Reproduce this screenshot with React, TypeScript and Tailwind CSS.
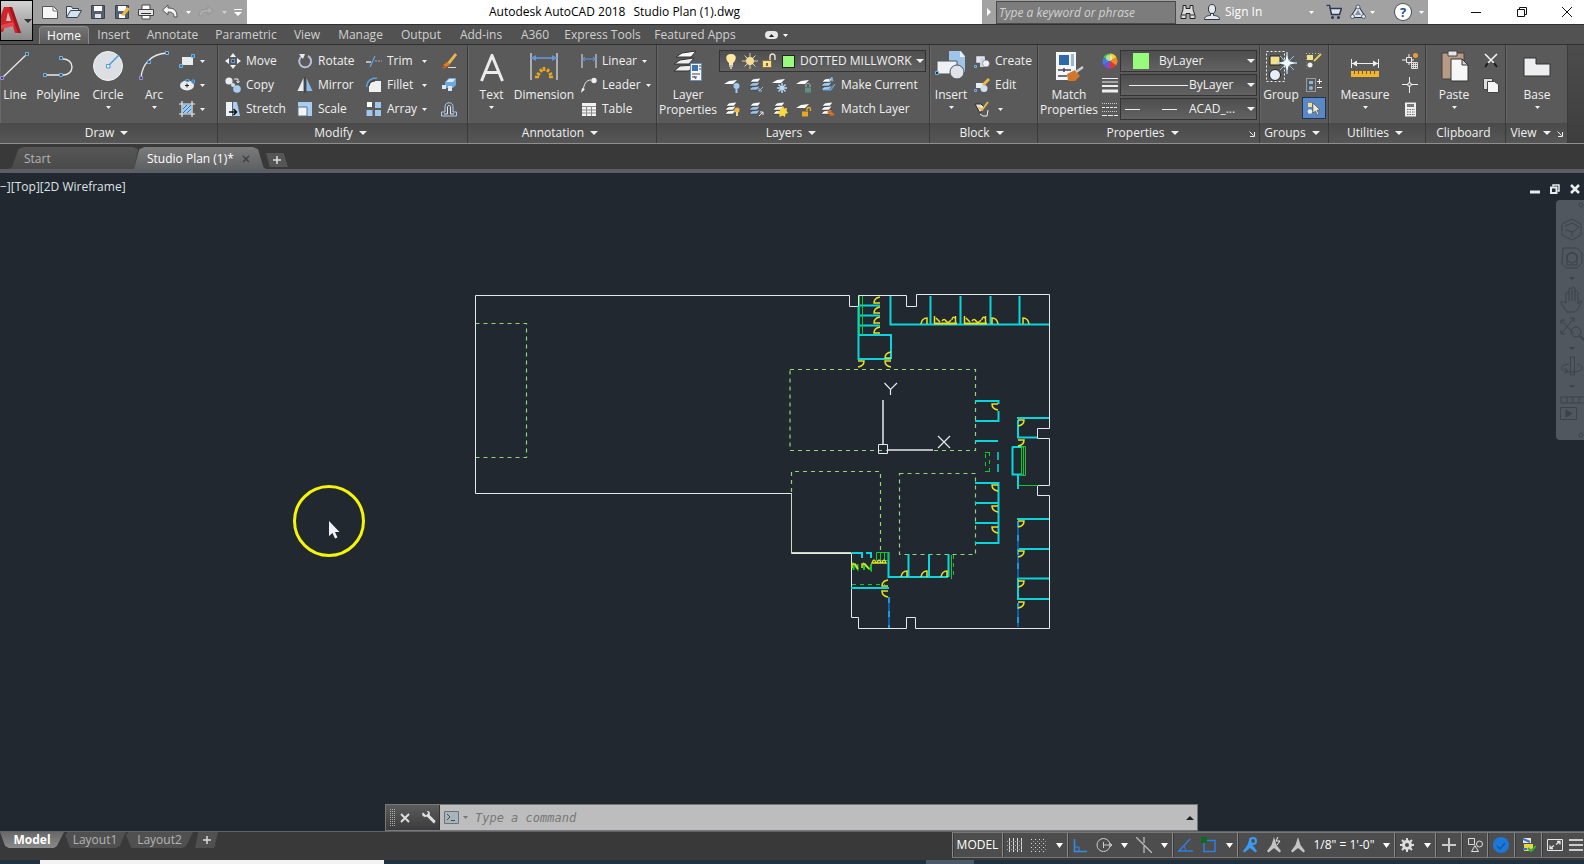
import type { ReactNode } from "react";

type SvgProps = { children: ReactNode; className?: string };

function Small({ children, className = "" }: SvgProps) {
  return (
    <svg viewBox="0 0 16 16" fill="none" className={"size-4 shrink-0 " + className}>
      {children}
    </svg>
  );
}

function Large({ children, className = "" }: SvgProps) {
  return (
    <svg viewBox="0 0 32 32" fill="none" className={"size-8 shrink-0 " + className}>
      {children}
    </svg>
  );
}

function Caret({ className = "" }: { className?: string }) {
  return (
    <svg viewBox="0 0 8 4" className={"h-1 w-2 shrink-0 " + className}>
      <path d="M0 0h8L4 4z" fill="currentColor" />
    </svg>
  );
}

function TinyCaret({ className = "" }: { className?: string }) {
  return (
    <svg viewBox="0 0 5 3" className={"h-[3px] w-[5px] shrink-0 " + className}>
      <path d="M0 0h5L2.500 3z" fill="currentColor" />
    </svg>
  );
}

/* Ribbon building blocks */

function Panel({ title, caret = true, launcher, className = "", children }: { title: string; caret?: boolean; launcher?: boolean; className?: string; children: ReactNode }) {
  return (
    <section className={"flex shrink-0 flex-col border-r border-[#3a3a3a] shadow-[inset_1px_0_0_#686868] " + className}>
      <div className="flex h-[79px] overflow-hidden pt-1">{children}</div>
      <button className={"relative flex h-5 items-center justify-center gap-[6px] bg-linear-to-b from-[#4a4a4a] to-[#565656] " + (launcher ? "pr-3" : "pr-1")}>
        {title}
        {caret && <Caret />}
        {launcher && (
          <svg viewBox="0 0 6 6" className="absolute right-1 top-2 size-[6px]" fill="none" stroke="#eee">
            <path d="M0.500 0.500l4 4M5.500 1v4.500H1" />
          </svg>
        )}
      </button>
    </section>
  );
}

function BigButton({ label, second, arrow, className = "", children }: { label: string; second?: string; arrow?: boolean; className?: string; children: ReactNode }) {
  return (
    <button className={"flex h-[72px] shrink-0 flex-col items-center whitespace-nowrap leading-[15px] " + className}>
      <span className="flex h-[38px] items-center justify-center pb-1">{children}</span>
      <span>{label}</span>
      {second && <span>{second}</span>}
      {arrow && <TinyCaret className="mt-1" />}
    </button>
  );
}

function Row({ label, arrow, children }: { label?: string; arrow?: boolean; children: ReactNode }) {
  return (
    <button className="flex h-6 w-full items-center gap-[5px] whitespace-nowrap">
      {children}
      {label && <span>{label}</span>}
      {arrow && <TinyCaret className="ml-auto mr-3" />}
    </button>
  );
}

/* Draw icons */

const LineIcon = () => (
  <Large>
    <path d="M3 28L28 4" stroke="#e8e8e8" strokeWidth="1.3" />
    <path d="M1.500 26.500h3v3h-3z" stroke="#a08be0" fill="#44505c" />
    <path d="M26.500 2.500h3v3h-3z" stroke="#6fb3e4" fill="#44505c" />
  </Large>
);
const PolylineIcon = () => (
  <Large>
    <path d="M4 25h17c5 0 9-3 9-8s-4-8-9-8" stroke="#e8e8e8" strokeWidth="1.4" />
    <path d="M1.500 23.500h3v3h-3zM17.500 23.500h3v3h-3zM17.500 6.500h3v3h-3z" stroke="#6fb3e4" fill="#44505c" />
  </Large>
);
const CircleIcon = () => (
  <Large>
    <circle cx="16" cy="16" r="14.500" fill="#dcdfe3" stroke="#f4f4f4" />
    <path d="M17 15L27 5" stroke="#4a9bd9" strokeWidth="1.4" />
    <path d="M14.500 14.500h3.500v3.500h-3.500z" fill="#eef4fa" stroke="#4a9bd9" />
  </Large>
);
const ArcIcon = () => (
  <Large>
    <path d="M3 28C4 14 13 4 29 3" stroke="#e8e8e8" strokeWidth="1.4" />
    <path d="M1.500 26.500h3v3h-3z" stroke="#a08be0" fill="#44505c" />
    <path d="M9.500 10.500h3v3h-3zM27.500 1.500h3v3h-3z" stroke="#6fb3e4" fill="#44505c" />
  </Large>
);
const RectIcon = () => (
  <Small>
    <path d="M3 4h11v8H3z" fill="#e9ecef" />
    <path d="M0.500 11.500h3v3h-3zM12.500 1.500h3v3h-3z" fill="#3b6ea5" stroke="#6fb3e4" />
  </Small>
);
const EllipseIcon = () => (
  <Small>
    <ellipse cx="8" cy="8.500" rx="7" ry="5" fill="#e9ecef" />
    <path d="M6 8.500h4M8 6.500v4" stroke="#222" />
    <path d="M7 2.500h3v2H7zM13 3h2.500v3H13z" fill="#3b6ea5" stroke="#5aa2dc" />
  </Small>
);
const HatchIcon = () => (
  <Small>
    <path d="M3 0v16M13 0v16M0 3h16M0 13h16" stroke="#e9ecef" strokeWidth="1.200" />
    <path d="M3.500 3.500h9v9h-9z" fill="#9fc9ee" />
    <path d="M4 8l4-4M4 12l8-8M8 12l4-4" stroke="#3673ad" />
  </Small>
);

/* Modify icons */

const MoveIcon = () => (
  <Small>
    <path d="M8 0l3 4H5zM8 16l3-4H5zM0 8l4-3v6zM16 8l-4-3v6z" fill="#f2f2f2" />
    <path d="M6.500 6.500h3v3h-3z" stroke="#5aa2dc" fill="#2d4a66" />
  </Small>
);
const RotateIcon = () => (
  <Small>
    <path d="M5 3.200A6 6 0 1 0 11 3" stroke="#b9bed8" strokeWidth="2" />
    <path d="M2 1h6L6 6z" fill="#e6e9f5" />
  </Small>
);
const TrimIcon = () => (
  <Small>
    <path d="M0 9h5" stroke="#e2e2e2" strokeWidth="1.400" />
    <path d="M4 14L9 3" stroke="#5aa2dc" strokeWidth="1.400" />
    <path d="M9 8h7" stroke="#8fb6dc" strokeDasharray="2 1" />
  </Small>
);
const CopyIcon = () => (
  <Small>
    <circle cx="4" cy="4" r="3.600" fill="#e9edf2" />
    <circle cx="8" cy="8" r="2" fill="#cfe0f2" />
    <circle cx="12" cy="12" r="3.800" fill="#a9cdf0" />
    <path d="M9 2h4v3M11.500 4l1.500 2 1.500-2" stroke="#eee" />
  </Small>
);
const MirrorIcon = () => (
  <Small>
    <path d="M6.500 1v13H0.500z" fill="#e9edf2" />
    <path d="M9.500 1v13h6z" fill="#86bdee" />
    <path d="M8 0v16" stroke="#333" />
  </Small>
);
const FilletIcon = () => (
  <Small>
    <path d="M0.500 10C1 4 5 1 11 1" stroke="#5aa2dc" strokeWidth="1.400" />
    <path d="M3 15V9c0-3 3-5 6-5h6v11z" fill="#eef0f2" />
    <path d="M3 9c0-3 3-5 6-5" stroke="#222" />
  </Small>
);
const StretchIcon = () => (
  <Small>
    <path d="M1 1h6v14H1z" fill="#eef2f6" />
    <path d="M8 1h4l3 14H8z" fill="#a9cdf0" />
    <path d="M4 11h7M8.500 8l3 3-3 3" stroke="#111" strokeWidth="1.500" />
  </Small>
);
const ScaleIcon = () => (
  <Small>
    <path d="M1 1h14v14H1z" fill="#a9cdf0" />
    <path d="M1 6h9v9H1z" fill="#f2f4f6" stroke="#56718c" />
  </Small>
);
const ArrayIcon = () => (
  <Small>
    <path d="M1 1h5v5H1z" fill="#fff" />
    <path d="M9 1h6v6H9zM0.500 9h6v6h-6zM9 9h6v6H9z" fill="#9fc6ec" />
  </Small>
);
const EraseIcon = () => (
  <Small>
    <path d="M6 10L14 0l2 2-7 9z" fill="#eab54a" />
    <path d="M2 12l4-3 3 3-4 2z" fill="#e07a1e" />
    <path d="M1 14.500h4" stroke="#d4571c" strokeWidth="1.500" />
    <path d="M7 14.500h8" stroke="#ddd" />
  </Small>
);
const ExplodeIcon = () => (
  <Small>
    <path d="M4 5l4-4h7v7l-3 3H4z" fill="#6fa8dc" />
    <path d="M1 8h4v4H1zM7 9h4v5H7zM8 2h6l-2 3H5z" fill="#d9e8f6" />
  </Small>
);
const OffsetIcon = () => (
  <Small>
    <path d="M0.500 15v-4H4V5.500C4 0.500 12 0.500 12 5.500V11h3.500v4z" stroke="#a9d0f2" />
    <path d="M3 13h3.500V6c0-2 3-2 3 0v7H13" stroke="#e2e8ee" />
  </Small>
);

/* Annotation icons */

const DimensionIcon = () => (
  <Large>
    <path d="M3 3v27M29 3v27" stroke="#e6e6e6" strokeWidth="1.200" />
    <path d="M3 8h26" stroke="#5a9be0" strokeWidth="1.600" />
    <path d="M3 8l5-3v6zM29 8l-5-3v6z" fill="#5a9be0" />
    <path d="M7 27h4M9 23l3 2M12 19l2 3M16 17v4M21 19l-2 3M24 23l-3 2M25 27h-4" stroke="#e9a820" strokeWidth="2.600" />
  </Large>
);
const LinearIcon = () => (
  <Small>
    <path d="M1 1v14M15 1v14" stroke="#e6e6e6" />
    <path d="M1 6h14M4 4L1.500 6 4 8M12 4l2.500 2L12 8" stroke="#5a9be0" />
  </Small>
);
const LeaderIcon = () => (
  <Small>
    <path d="M2 14C3 7 5 3 10 3" stroke="#e6e6e6" />
    <circle cx="13" cy="3.500" r="2.700" fill="#eee" />
    <path d="M0 16l1-5 3 1z" fill="#eee" />
  </Small>
);
const TableIcon = () => (
  <Small>
    <path d="M1 2h14v13H1z" fill="#f2f2f2" />
    <path d="M1 5.500h14M1 9h14M1 12h14M5.500 5v10M10.500 5v10" stroke="#8a8a8a" />
  </Small>
);

/* Layer icons */

const Sheets = ({ accent = "#fff" }: { accent?: string }) => (
  <>
    <path d="M4 10l8-1-3 4H1z" fill={accent} stroke="#333" strokeWidth="0.500" />
    <path d="M4 6l8-1-3 4H1z" fill={accent} stroke="#333" strokeWidth="0.500" />
    <path d="M5 2l8-1-3 4H2z" fill="#fff" stroke="#333" strokeWidth="0.500" />
  </>
);
const LayerPropsIcon = () => (
  <Large>
    <path d="M8 16l14-1-5 6H2z" fill="#eee" stroke="#333" />
    <path d="M8 10l14-2-5 6H2z" fill="#eee" stroke="#333" />
    <path d="M10 3l14-2-5 6H4z" fill="#fff" stroke="#333" />
    <path d="M18.500 13.500h11v17h-11z" fill="#f4f6f8" stroke="#6d8db0" />
    <path d="M20 15h6v6h-6z" fill="#3e74b4" />
    <path d="M27 16h2M27 19h2M20 24h8M20 27h5M22 26l2 3" stroke="#445" />
  </Large>
);
const LayerOffIcon = () => (
  <Small>
    <path d="M5 4l8-1-4 4H0z" fill="#fff" />
    <circle cx="12.500" cy="9" r="3" fill="#9fcbf2" />
    <path d="M12.500 12v4" stroke="#9fcbf2" strokeWidth="2" />
  </Small>
);
const LayerIsoIcon = () => (
  <Small>
    <Sheets accent="#9cc4e8" />
    <path d="M15 10l-4 4M11 11v3h3" stroke="#8fc0ee" />
  </Small>
);
const LayerFreezeIcon = () => (
  <Small>
    <path d="M5 3l8-1-4 4H0z" fill="#fff" />
    <path d="M10 6v10M5 11h10M6.500 7.500l7 7M13.500 7.500l-7 7" stroke="#b8dcfa" strokeWidth="1.400" />
  </Small>
);
const LayerLockIcon = () => (
  <Small>
    <path d="M5 4l8-1-4 4H0z" fill="#fff" />
    <path d="M9 10.500h6v5H9z" fill="#5f8f86" />
    <path d="M10 10V8c0-2 4-2 4 0v2" stroke="#9fc0b8" />
  </Small>
);
const MakeCurrentIcon = () => (
  <Small>
    <Sheets accent="#a9d0f2" />
    <path d="M3 13h8l4-6M9 3l3-3 1 4z" stroke="#6fb3e4" fill="#6fb3e4" fillOpacity="0.400" />
  </Small>
);
const LayerOnIcon = () => (
  <Small>
    <Sheets />
    <circle cx="13" cy="9" r="2.600" fill="#f4b740" />
    <path d="M13 11v4" stroke="#f7d58a" strokeWidth="2" />
  </Small>
);
const LayerUnisoIcon = () => (
  <Small>
    <Sheets accent="#9cc4e8" />
    <path d="M11 15l4-4M12 11h3v3" stroke="#eee" />
  </Small>
);
const LayerThawIcon = () => (
  <Small>
    <Sheets />
    <path d="M11 5l1.200 2.500L15 7l-.5 2.800L16 12l-2.500.8L13 16l-2.500-1.600L7.500 16l0-3L5.500 11l2.500-1.200L8 7l2 .5z" fill="#ffd93b" />
  </Small>
);
const LayerUnlockIcon = () => (
  <Small>
    <path d="M5 4l8-1-4 4H0z" fill="#fff" />
    <path d="M6 10.500h6v5H6z" fill="#e9a820" />
    <path d="M11 10V8c0-2 3.500-2 3.500 0v2" stroke="#e9a820" strokeWidth="1.300" />
  </Small>
);
const MatchLayerIcon = () => (
  <Small>
    <Sheets />
    <path d="M7 11l3-2 5 5-4 1z" fill="#d2711f" />
  </Small>
);
const BulbIcon = () => (
  <Small>
    <path d="M8 1C1 1 3 8 6 10v2h4v-2c3-2 5-9-2-9z" fill="#ffe9a0" />
    <path d="M6 13h4M7 15h2" stroke="#ddd" strokeWidth="1.500" />
  </Small>
);
const SunIcon = () => (
  <Small>
    <path d="M8 0v16M0 8h16M2.500 2.500l11 11M13.500 2.500l-11 11" stroke="#d8cfa8" />
    <circle cx="8" cy="8" r="4" fill="#f8dc92" />
  </Small>
);
const UnlockIcon = () => (
  <Small>
    <path d="M1.500 7.500h9v7h-9z" fill="#f6dd9a" stroke="#8a6d2a" />
    <path d="M9 7V4c0-4 5-4 5 0v3" stroke="#ece4c8" strokeWidth="1.400" />
    <path d="M6 10v3" stroke="#5a4410" strokeWidth="1.500" />
  </Small>
);

/* Block and property icons */

const InsertIcon = () => (
  <Large>
    <path d="M14 1h12l4 5v16H14z" fill="#9fc4ea" />
    <path d="M25 1l5 6h-5z" fill="#e8f1fb" />
    <path d="M2 11h20v13H2z" fill="#eef0f3" stroke="#4a5460" />
    <circle cx="22" cy="22" r="7" fill="#dfe3e8" stroke="#4a5460" />
    <path d="M0.500 21.500h3v3h-3z" fill="#234" stroke="#6fb3e4" />
  </Large>
);
const CreateIcon = () => (
  <Small>
    <path d="M2 3h9v7H2z" fill="#e6e6f2" stroke="#556" strokeWidth="0.500" />
    <path d="M6 5h5v9H6z" fill="#cfd6e4" />
    <circle cx="12" cy="10.500" r="3.500" fill="#f2f2f2" stroke="#556" strokeWidth="0.500" />
    <path d="M0.500 12.500h2v2h-2z" stroke="#6fb3e4" />
  </Small>
);
const EditIcon = () => (
  <Small>
    <path d="M2 6h8v5H2z" fill="#e6eaf2" />
    <circle cx="10" cy="11.500" r="3.500" fill="#cfe0f2" />
    <path d="M8 7l6-6 2 2-6 6z" fill="#f0b940" />
    <path d="M0.500 12.500h2v2h-2z" stroke="#6fb3e4" />
  </Small>
);
const AttrIcon = () => (
  <Small>
    <path d="M1 3h6l3 3-4 6z" fill="#e6e6e6" stroke="#2c2c2c" />
    <path d="M4 6l4 3 6-8" stroke="#e8bb4a" strokeWidth="1.800" />
    <path d="M6 13l3 2h4l1-6" stroke="#eee" />
  </Small>
);
const MatchPropsIcon = () => (
  <Large>
    <path d="M3 2h20v28H3z" fill="#f4f6f8" />
    <path d="M6 5h10v10H6z" fill="#2f68ab" />
    <path d="M18 4h3v12h-3z" fill="#9bb7d4" />
    <path d="M5 20h13M11 18v4M5 26h9" stroke="#445" strokeWidth="1.500" />
    <path d="M14 24l8-4 5 6-5 5h-7z" fill="#d2762a" />
    <path d="M23 22l7-5" stroke="#c9ccd0" strokeWidth="2.500" />
  </Large>
);
const ColorWheelIcon = () => (
  <Small>
    <path d="M8 8V0.500A7.500 7.500 0 0 1 14.500 4.500z" fill="#f3d436" />
    <path d="M8 8l6.500-3.500A7.500 7.500 0 0 1 14 12.500z" fill="#f08a2b" />
    <path d="M8 8l6 4.500A7.500 7.500 0 0 1 8 15.500z" fill="#dd3737" />
    <path d="M8 8v7.500A7.500 7.500 0 0 1 1.500 12z" fill="#7c4bd0" />
    <path d="M8 8l-6.500 4A7.500 7.500 0 0 1 1.500 4.500z" fill="#3f7be0" />
    <path d="M8 8L1.500 4.500A7.500 7.500 0 0 1 8 0.500z" fill="#57c24b" />
    <circle cx="7" cy="5" r="3" fill="#fff" fillOpacity="0.500" />
  </Small>
);
const LineweightIcon = () => (
  <Small>
    <path d="M0 1.500h16M0 5h16" stroke="#eee" />
    <path d="M0 9h16" stroke="#eee" strokeWidth="2" />
    <path d="M0 14h16" stroke="#eee" strokeWidth="3" />
  </Small>
);
const LinetypeIcon = () => (
  <Small>
    <path d="M0 2.500h16M0 10.500h16" stroke="#ccc" strokeDasharray="1 1" />
    <path d="M0 6.500h16" stroke="#eee" strokeDasharray="3 1" />
    <path d="M0 14.500h16" stroke="#eee" strokeDasharray="5 1" />
  </Small>
);

/* Groups, utilities, clipboard */

const GroupIcon = () => (
  <Large>
    <path d="M1.500 1.500h18v30h-18z" stroke="#eee" strokeDasharray="2 2" />
    <path d="M5 6h10v9H5z" fill="#f2e08c" stroke="#222" />
    <circle cx="10" cy="25" r="5.500" fill="#e6eef6" stroke="#222" />
    <path d="M22 2v22M12 13h20" stroke="#a8d4fa" strokeWidth="1.400" />
    <path d="M15 6l14 14M29 6L15 20" stroke="#8fc4f4" />
    <path d="M22 5l2 6 6 2-6 2-2 6-2-6-6-2 6-2z" fill="#f2faff" />
  </Large>
);
const GroupEditIcon = () => (
  <Small>
    <path d="M1 2h6v5H1z" fill="#f2e08c" />
    <circle cx="4" cy="12" r="2.500" fill="#eee" />
    <path d="M8 8l7-7" stroke="#e8c860" strokeWidth="2" />
    <path d="M0 0.500h15M0 0v16" stroke="#bbb" strokeDasharray="1 2" />
  </Small>
);
const UngroupIcon = () => (
  <Small>
    <path d="M0.500 1.500h9v13h-9z" stroke="#ddd" strokeDasharray="1 1" />
    <path d="M3 4h4v3H3z" fill="#8ab6e0" />
    <circle cx="5" cy="11" r="2" fill="#8ab6e0" />
    <path d="M11 4.500h5M13.500 2v5M11 10.500h5" stroke="#eee" />
  </Small>
);
const GroupSelIcon = () => (
  <Small>
    <path d="M2 3h4v4H2z" fill="#f2e08c" />
    <circle cx="4" cy="11.500" r="2.300" fill="#eee" />
    <path d="M7 3l7 7-3 .3 2 4-1.600.8-2-4L7 13z" fill="#f4e9c8" stroke="#333" strokeWidth="0.500" />
  </Small>
);
const MeasureIcon = () => (
  <Large>
    <path d="M2.500 9v9M29.500 9v9M3 13.500h26" stroke="#eee" />
    <path d="M3 13.500l5-3v6zM29 13.500l-5-3v6z" fill="#eee" />
    <path d="M2 21h28v6H2z" fill="#f0b52c" />
    <path d="M5.500 21v3M9.500 21v3M13.500 21v3M17.500 21v3M21.500 21v3M25.500 21v3" stroke="#7a5410" />
  </Large>
);
const QuickCalcIcon = () => (
  <Small>
    <path d="M0 7h5M7 1v4M7 9v3M9 7h3M4.500 4.500h5v5h-5z" stroke="#eee" />
    <path d="M9.500 9.500h6v6h-6zM9.500 11.500h6M9.500 13.500h6M11.500 10v5M13.500 10v5" stroke="#ddd" />
    <circle cx="13.500" cy="2.500" r="2.500" fill="#ec9a3a" />
  </Small>
);
const PointIcon = () => (
  <Small>
    <path d="M7.500 0v16M0 7.500h16" stroke="#eee" />
    <path d="M6 6h3v3H6z" stroke="#eee" fill="#555" />
  </Small>
);
const CalculatorIcon = () => (
  <Small>
    <path d="M3 1.500h11v14H3z" fill="#eee" />
    <path d="M5 3h7v3H5z" fill="#777" />
    <path d="M5 8.500h8M5 11h8M5 13.500h8" stroke="#666" strokeDasharray="1.500 1" />
  </Small>
);
const PasteIcon = () => (
  <Large>
    <path d="M4 3h22v26H4z" fill="#b59b86" stroke="#4a3f36" />
    <path d="M10 1h9v5h-9z" fill="#e8e8e8" stroke="#444" />
    <path d="M13 9h11l6 6v16H13z" fill="#f6f6f6" stroke="#333" />
    <path d="M24 9v6h6z" fill="#cfcfcf" stroke="#333" />
  </Large>
);
const CutIcon = () => (
  <Small>
    <path d="M2 1l9 9M14 1L5 10" stroke="#f2f2f2" strokeWidth="1.600" />
    <path d="M5 10l-3 4M11 10l3 4" stroke="#1d1d1d" strokeWidth="2" />
  </Small>
);
const CopyClipIcon = () => (
  <Small>
    <path d="M0.500 1.500h9v11h-9z" fill="#ddd" stroke="#444" />
    <path d="M4.500 4.500h7l4 3v8h-11z" fill="#f6f6f6" stroke="#444" />
  </Small>
);
const BaseIcon = () => (
  <Large>
    <path d="M3 8h12v6h14v12H3z" fill="#eceef0" stroke="#333" />
  </Large>
);

/* Title bar */

function TitleBar() {
  return (
    <header className="relative flex h-6 shrink-0 bg-white text-black">
      <div className="flex w-[247px] items-center bg-[#a2a2a2] pl-[42px] text-white">
        <button aria-label="New" className="w-6">
          <Small><path d="M0.500 2.500h11l4 4v8h-15z" fill="#f6f6f6" stroke="#555" /><path d="M11 2v5h5" stroke="#777" /></Small>
        </button>
        <button aria-label="Open" className="w-6">
          <Small><path d="M0.500 13.500v-11h5l1 2h6v2" fill="#eee" stroke="#345" /><path d="M0.500 13.500l4-7h11l-4 7z" fill="#d5e2ee" stroke="#345" /></Small>
        </button>
        <button aria-label="Save" className="w-6">
          <Small><path d="M1.500 1.500h13v13h-13z" fill="#566070" stroke="#39424e" /><path d="M4 2h8v5H4z" fill="#fff" /><path d="M5 10h6v4H5z" fill="#dfe4ea" /></Small>
        </button>
        <button aria-label="Save As" className="w-6">
          <Small><path d="M1.500 1.500h13v13h-13z" fill="#566070" stroke="#39424e" /><path d="M4 2h8v5H4zM5 10h6v4H5z" fill="#fff" /><path d="M7 11l6-8 3 2-6 7z" fill="#efb64a" /></Small>
        </button>
        <button aria-label="Plot" className="w-6">
          <Small><path d="M4 1h8v5H4zM4 10h8v5H4z" fill="#fff" stroke="#444" /><path d="M0.500 5.500h15v6h-15z" fill="#e6e6e6" stroke="#444" /><path d="M3 9.500h10" stroke="#333" /></Small>
        </button>
        <button aria-label="Undo" className="flex w-9 items-center gap-2">
          <Small><path d="M6 1v3c6 0 9 2 9 9h-3c0-4-2-5-6-5v3L0.500 6z" fill="#f4f4f4" stroke="#555" /></Small>
          <TinyCaret />
        </button>
        <button aria-label="Redo" className="flex w-9 items-center gap-2 opacity-50">
          <Small><path d="M10 2v3C4 5 1 7 1 12h3c0-3 2-4 6-4v3l5-4.500z" fill="#bbb" stroke="#888" /></Small>
          <TinyCaret />
        </button>
        <button aria-label="Customize" className="flex flex-col items-center gap-[2px]">
          <span className="h-px w-2 bg-white" />
          <Caret />
        </button>
      </div>
      <h1 className="flex flex-1 items-center justify-center gap-2 whitespace-nowrap text-[12px]">
        <span>Autodesk AutoCAD 2018</span>
        <span>Studio Plan (1).dwg</span>
      </h1>
      <div className="flex w-[446px] shrink-0 items-center bg-[#a2a2a2] text-white">
        <button aria-label="Collapse search" className="flex w-[14px] justify-center">
          <svg viewBox="0 0 4 8" className="h-2 w-1"><path d="M0 0v8l4-4z" fill="#fff" /></svg>
        </button>
        <input aria-label="Search" placeholder="Type a keyword or phrase" className="h-[23px] w-[180px] border border-[#4a4a4a] bg-[#7c7c7c] px-[2px] text-[12px] italic placeholder:text-[#d2d2d2]" />
        <button aria-label="Find" className="flex w-6 justify-center">
          <Small><path d="M3 1.500h3v3h4v-3h3v4l2 6v3h-5v-5H6v5H1v-3l2-6z" fill="#ddd" stroke="#222" /><path d="M1.500 11h4M10.500 11h4" stroke="#222" /></Small>
        </button>
        <button className="flex items-center gap-[5px] whitespace-nowrap">
          <svg viewBox="0 0 16 16" className="ml-1 size-4" fill="#e6e9ee" stroke="#2d3642"><path d="M0.500 15.500c0-3 3-4 6-4V9h3v2.500c3 0 6 1 6 4z" /><ellipse cx="8" cy="5" rx="3.500" ry="4.500" /></svg>
          Sign In
        </button>
        <TinyCaret className="ml-auto" />
        <button aria-label="App store" className="ml-3 mr-2">
          <Small><path d="M0.500 1.500h3l2 9h8l2-6h-11" fill="#dde3ea" stroke="#2d3950" strokeWidth="1.500" /><circle cx="6.500" cy="13.500" r="1.500" fill="#2d3950" /><circle cx="12.500" cy="13.500" r="1.500" fill="#2d3950" /></Small>
        </button>
        <button aria-label="Autodesk account" className="mr-1">
          <Small>
            <path d="M8 4L13 12H3z" stroke="#2d3950" strokeWidth="4" strokeLinejoin="round" />
            <path d="M8 4L13 12H3z" stroke="#dfe5ee" fill="#8a8f98" strokeWidth="2" strokeLinejoin="round" />
            <circle cx="8" cy="3" r="2" fill="#dfe5ee" stroke="#2d3950" strokeWidth="0.700" />
            <circle cx="2.500" cy="12.500" r="2" fill="#dfe5ee" stroke="#2d3950" strokeWidth="0.700" />
            <circle cx="13.500" cy="12.500" r="2" fill="#dfe5ee" stroke="#2d3950" strokeWidth="0.700" />
          </Small>
        </button>
        <TinyCaret />
        <button aria-label="Help" className="ml-5 flex size-4 items-center justify-center rounded-full bg-white text-[13px] font-bold leading-4 text-[#1d4f9c] ring-1 ring-[#456]">?</button>
        <TinyCaret className="ml-2 mr-1" />
      </div>
      <div className="flex w-[156px] shrink-0 items-center justify-between pl-[42px] pr-[11px]">
        <button aria-label="Minimize"><svg viewBox="0 0 12 12" className="size-3" stroke="#111"><path d="M1 6.500h10" /></svg></button>
        <button aria-label="Restore"><svg viewBox="0 0 12 12" className="size-3" fill="none" stroke="#111"><path d="M1.500 3.500h7v7h-7zM3.500 3V1.500h7v7H9" /></svg></button>
        <button aria-label="Close"><svg viewBox="0 0 12 12" className="size-3" stroke="#111"><path d="M1 1l10 10M11 1L1 11" /></svg></button>
      </div>
      {/* Application menu button */}
      <button aria-label="Application menu" className="absolute left-0 top-0 z-10 flex h-[41px] w-[33px] items-center gap-[2px] overflow-hidden border border-black bg-linear-to-b from-[#d2d2d2] to-[#8a8a8a]">
        <svg viewBox="0 0 21 32" className="h-8 w-[21px] shrink-0" fill="none">
          <path d="M3 2h8l9 26h-6l-2-7H4l-2 6H0V10z" fill="#d3242c" />
          <path d="M5 16h5L7 7z" fill="#c2c2c2" />
          <path d="M11 2l9 26h-3L8 2z" fill="#a3161d" />
          <path d="M0 20l12-3 1 4-13 3z" fill="#e5444a" />
        </svg>
        <Caret className="text-[#333]" />
      </button>
    </header>
  );
}

const menuTabs = [
  { name: "Insert", width: "w-[49px]" },
  { name: "Annotate", width: "w-[69px]" },
  { name: "Parametric", width: "w-[78px]" },
  { name: "View", width: "w-[44px]" },
  { name: "Manage", width: "w-[63px]" },
  { name: "Output", width: "w-[58px]" },
  { name: "Add-ins", width: "w-[62px]" },
  { name: "A360", width: "w-[46px]" },
  { name: "Express Tools", width: "w-[89px]" },
  { name: "Featured Apps", width: "w-[96px]" },
];

function MenuTabs() {
  return (
    <nav className="flex h-[21px] shrink-0 items-end border-y border-[#2f2f2f] bg-[#525252] pl-[39px] text-[#d0d0d0]">
      <button className="h-[18px] w-[50px] rounded-t-sm border-x border-t border-[#8a8a8a] bg-linear-to-b from-[#747474] to-[#5c5c5c] text-white">Home</button>
      {menuTabs.map((t) => (
        <button key={t.name} className={"h-[18px] whitespace-nowrap text-center " + t.width}>{t.name}</button>
      ))}
      <button aria-label="Minimize ribbon" className="ml-[22px] flex h-[18px] items-center gap-[5px] text-white">
        <span className="flex h-2 w-[13px] items-center justify-center rounded-sm bg-[#e6e6e6]">
          <TinyCaret className="rotate-180 text-[#222]" />
        </span>
        <TinyCaret />
      </button>
    </nav>
  );
}

function PropertyCombo({ label, value, children }: { label: string; value: string; children: ReactNode }) {
  return (
    <label className="flex h-[22px] items-center border border-[#333] bg-linear-to-b from-[#4e4e4e] to-[#626262]">
      {children}
      <select aria-label={label} className="min-w-0 flex-1 appearance-none">
        <option>{value}</option>
      </select>
      <Caret className="mr-px" />
    </label>
  );
}

function Ribbon() {
  return (
    <div className="flex h-[99px] shrink-0 overflow-hidden border-b border-[#8f8f8f] bg-linear-to-b from-[#4c4c4c] to-[#3e3e3e] text-[#f0f0f0] [&>section]:bg-[#5a5a5a]">
      <Panel title="Draw" className="w-[218px]">
        <BigButton label="Line" className="w-[30px]"><LineIcon /></BigButton>
        <BigButton label="Polyline" className="w-14"><PolylineIcon /></BigButton>
        <BigButton label="Circle" arrow className="w-11"><CircleIcon /></BigButton>
        <BigButton label="Arc" arrow className="w-12"><ArcIcon /></BigButton>
        <div className="w-[41px] pl-px">
          <Row arrow><RectIcon /></Row>
          <Row arrow><EllipseIcon /></Row>
          <Row arrow><HatchIcon /></Row>
        </div>
      </Panel>

      <Panel title="Modify" className="w-[250px]">
        <div className="w-[72px] pl-[7px]">
          <Row label="Move"><MoveIcon /></Row>
          <Row label="Copy"><CopyIcon /></Row>
          <Row label="Stretch"><StretchIcon /></Row>
        </div>
        <div className="w-[76px] pl-[7px]">
          <Row label="Rotate"><RotateIcon /></Row>
          <Row label="Mirror"><MirrorIcon /></Row>
          <Row label="Scale"><ScaleIcon /></Row>
        </div>
        <div className="w-[73px]">
          <Row label="Trim" arrow><TrimIcon /></Row>
          <Row label="Fillet" arrow><FilletIcon /></Row>
          <Row label="Array" arrow><ArrayIcon /></Row>
        </div>
        <div className="flex-1 pl-[2px]">
          <Row><EraseIcon /></Row>
          <Row><ExplodeIcon /></Row>
          <Row><OffsetIcon /></Row>
        </div>
      </Panel>

      <Panel title="Annotation" className="w-[189px]">
        <BigButton label="Text" arrow className="w-[47px]">
          <svg viewBox="0 0 24 28" className="mt-1 h-7 w-6" fill="none" stroke="#ececec" strokeWidth="3">
            <path d="M1.500 27L12 1.500 22.500 27M5.500 18.500h13" />
          </svg>
        </BigButton>
        <BigButton label="Dimension" className="w-[58px]"><DimensionIcon /></BigButton>
        <div className="w-[82px] pl-2">
          <Row label="Linear" arrow><LinearIcon /></Row>
          <Row label="Leader" arrow><LeaderIcon /></Row>
          <Row label="Table"><TableIcon /></Row>
        </div>
      </Panel>

      <Panel title="Layers" className="w-[273px]">
        <BigButton label="Layer" second="Properties" className="w-[62px]"><LayerPropsIcon /></BigButton>
        <div className="flex-1 pr-[3px]">
          <div className="flex h-6 items-center">
            <label className="flex h-[22px] w-full items-center gap-[3px] border border-[#333] bg-linear-to-b from-[#4e4e4e] to-[#626262] pl-[3px] pr-px">
              <BulbIcon />
              <SunIcon />
              <UnlockIcon />
              <span className="ml-[2px] size-[13px] shrink-0 border border-[#222] bg-[#98fb7c]" />
              <select aria-label="Layer" className="ml-[2px] min-w-0 flex-1 appearance-none">
                <option>DOTTED MILLWORK</option>
              </select>
              <Caret />
            </label>
          </div>
          <div className="flex h-6 items-center gap-2 whitespace-nowrap pl-[5px]">
            <LayerOffIcon />
            <LayerIsoIcon />
            <LayerFreezeIcon />
            <LayerLockIcon />
            <button className="flex items-center gap-[5px]"><MakeCurrentIcon />Make Current</button>
          </div>
          <div className="flex h-6 items-center gap-2 whitespace-nowrap pl-[5px]">
            <LayerOnIcon />
            <LayerUnisoIcon />
            <LayerThawIcon />
            <LayerUnlockIcon />
            <button className="flex items-center gap-[5px]"><MatchLayerIcon />Match Layer</button>
          </div>
        </div>
      </Panel>

      <Panel title="Block" className="w-[108px]">
        <BigButton label="Insert" arrow className="w-[42px]"><InsertIcon /></BigButton>
        <div className="flex-1 pl-[2px]">
          <Row label="Create"><CreateIcon /></Row>
          <Row label="Edit"><EditIcon /></Row>
          <button aria-label="Attributes" className="flex h-6 items-center gap-2"><AttrIcon /><TinyCaret /></button>
        </div>
      </Panel>

      <Panel title="Properties" launcher className="w-[222px]">
        <BigButton label="Match" second="Properties" className="w-[62px]"><MatchPropsIcon /></BigButton>
        <div className="w-5 pl-[2px]">
          <Row><ColorWheelIcon /></Row>
          <Row><LineweightIcon /></Row>
          <Row><LinetypeIcon /></Row>
        </div>
        <div className="flex flex-1 flex-col gap-[2px] pr-[2px] pt-px">
          <PropertyCombo label="Object color" value="ByLayer">
            <span className="ml-3 mr-[10px] size-4 bg-[#98fb7c]" />
          </PropertyCombo>
          <PropertyCombo label="Lineweight" value="ByLayer">
            <span className="ml-2 mr-px h-px w-[59px] bg-[#eee]" />
          </PropertyCombo>
          <PropertyCombo label="Linetype" value="ACAD_...">
            <span className="ml-1 mr-[22px] h-px w-[15px] bg-[#eee]" />
            <span className="mr-3 h-px w-[15px] bg-[#eee]" />
          </PropertyCombo>
        </div>
      </Panel>

      <Panel title="Groups" className="w-[69px]">
        <BigButton label="Group" className="w-[42px]"><GroupIcon /></BigButton>
        <div className="flex-1">
          <Row><span className="pl-1"><GroupEditIcon /></span></Row>
          <Row><span className="pl-1"><UngroupIcon /></span></Row>
          <button aria-label="Group selection" className="flex h-[22px] w-6 items-center justify-center border border-[#1f3558] bg-[#5b87c5]"><GroupSelIcon /></button>
        </div>
      </Panel>

      <Panel title="Utilities" className="w-[97px]">
        <BigButton label="Measure" arrow className="w-[72px]"><MeasureIcon /></BigButton>
        <div className="pl-px">
          <Row><QuickCalcIcon /></Row>
          <Row><PointIcon /></Row>
          <Row><CalculatorIcon /></Row>
        </div>
      </Panel>

      <Panel title="Clipboard" caret={false} className="w-20">
        <BigButton label="Paste" arrow className="w-14"><PasteIcon /></BigButton>
        <div className="pl-px">
          <Row><CutIcon /></Row>
          <Row><CopyClipIcon /></Row>
        </div>
      </Panel>

      <Panel title="View" launcher className="w-[62px]">
        <BigButton label="Base" arrow className="w-[62px]"><BaseIcon /></BigButton>
      </Panel>
    </div>
  );
}

function FileTabs() {
  return (
    <div className="flex h-[29px] shrink-0 items-end border-b-4 border-[#5b5f63] bg-[#393939] pl-2">
      <button className="flex h-[22px] w-[130px] items-center bg-linear-to-b from-[#565656] to-[#4a4a4a] pl-4 pt-[2px] text-[#b4b4b4] [clip-path:polygon(0_100%,3%_92%,8%_10%,12%_0,96%_0,100%_10%,97%_100%)]">Start</button>
      <div className="-ml-1 flex h-[22px] w-[132px] items-center justify-between bg-linear-to-b from-[#7b7b7b] to-[#5f6163] pl-[13px] pr-4 pt-[2px] text-white [clip-path:polygon(0_100%,4%_10%,8%_0,90%_0,94%_10%,98%_92%,100%_100%)]">
        Studio Plan (1)*
        <button aria-label="Close tab">
          <svg viewBox="0 0 8 8" className="size-2" stroke="#404040" strokeWidth="1.500"><path d="M1 1l6 6M7 1L1 7" /></svg>
        </button>
      </div>
      <button aria-label="New tab" className="mb-[2px] flex h-[14px] w-[22px] items-center justify-center bg-[#555] [clip-path:polygon(0_0,80%_0,100%_100%,18%_100%)]">
        <svg viewBox="0 0 10 10" className="size-[10px]" stroke="#e0e0e0" strokeWidth="1.500"><path d="M5 1v8M1 5h8" /></svg>
      </button>
    </div>
  );
}

/* Floor plan */

const doors: [number, number, string][] = [
  [927, 324, "scale(-1 1)"],
  [992, 324, ""],
  [1023, 324, ""],
  [880, 303, "rotate(-90)"],
  [880, 313, "rotate(-90)"],
  [880, 323, "rotate(-90)"],
  [880, 333, "rotate(-90)"],
  [858, 361, "rotate(90)"],
  [891, 358, "rotate(-90)"],
  [891, 361, "rotate(-90) scale(-1 1)"],
  [998, 404, "rotate(-90) scale(-1 1)"],
  [998, 485, "rotate(-90) scale(-1 1)"],
  [998, 506, "rotate(-90) scale(-1 1)"],
  [998, 527, "rotate(-90) scale(-1 1)"],
  [1018, 420, "rotate(90)"],
  [1018, 440, "rotate(90)"],
  [1018, 521, "rotate(90)"],
  [1018, 551, "rotate(90)"],
  [1018, 581, "rotate(90)"],
  [1018, 602, "rotate(90)"],
  [907, 577, "scale(-1 1)"],
  [927, 577, "scale(-1 1)"],
  [947, 577, "scale(-1 1)"],
  [888, 586, "rotate(-90)"],
  [888, 591, "rotate(-90) scale(-1 1)"],
];

function FloorPlan() {
  return (
    <svg className="absolute inset-0 size-full" fill="none">
      <g transform="translate(0 -173)">
        {/* Dotted millwork */}
        <g stroke="#92d67c" strokeDasharray="4 4" strokeWidth="1.200">
          <path d="M475.500 323.500h51v134h-51M790 369.500h185.500v81H790zM791.500 492v-20.500h89v81M899.500 473.500h76v81h-76z" />
        </g>
        {/* Building outline */}
        <path
          d="M475.500 295.500h374v11h9v-11h48v11h10v-12h133v134h-12v10h12v47h-12v10h12v133h-134v-11h-9v11h-48v-11h-7v-64h-60v-60h-316z"
          stroke="#e4e8ea"
        />
        <path d="M791.500 493v59.500h60" stroke="#c6dcb4" />
        {/* Partitions */}
        <g stroke="#08d6dc" strokeWidth="2">
          <path d="M858.500 306v53H891M859 305.500h21M859 315.500h21M859 325.500h21M859 335h32v24" />
          <path d="M890.500 296v28.500H1049M930.500 296v28M960.500 296v28M990.500 296v28M1019.500 296v28" />
          <path d="M975 401h23.500v3M998.500 411v10H975M975 441h23" />
          <path d="M998 452v21" strokeDasharray="8 4" strokeWidth="1.500" />
          <path d="M975 483h23.500v60H975M975 503h23M975 523h23" />
          <path d="M1017 418h32M1018 420v17.500h19M1012.500 447h10M1012.500 446.500v28h10M1018 475v14" />
          <path d="M1017 519h32M1017 549h32M1017 578.500h32M1017 599h32M1018 579v20" />
          <path d="M888.500 552v25H948M908.500 554v23M929 554v23M948.500 554v23M851 588h38M852 553h10v5M866 553h5v5" />
        </g>
        <g stroke="#0f5cb4" strokeWidth="2">
          <path d="M1018 521v56M1018 603v24M889 597v31" />
        </g>
        <g stroke="#1fb4dc" strokeDasharray="6 8" strokeWidth="1.500">
          <path d="M1018 521v56M1018 603v24M889 597v31" />
        </g>
        {/* Green fixtures */}
        <g stroke="#12c832">
          <path d="M859.500 296v38M862.500 296v39M1021.500 446.500h4v29h-4zM1023.500 447v28M951.500 555v24" />
          <path d="M1018 485.500h20M876.500 552.500h12v8h-12zM880.500 553v7M884.500 553v7" />
          <path d="M953.500 555v24M852 584.500h33M985 452.500h4M989.500 452v20M985 471.500h4M985.500 454v16" strokeDasharray="4 4" />
          <path d="M853.500 570v-6l4 5v-5M864 570v-6l7 6v-6" strokeWidth="2" />
        </g>
        {/* Doors and appliances */}
        <g stroke="#e6e02a" strokeWidth="1.500">
          {doors.map(([x, y, t]) => (
            <path key={`${x}-${y}`} d="M0 0V-6Q5 -6 6 0" transform={`translate(${x} ${y}) ${t}`} />
          ))}
          <g id="appliance">
            <path d="M934.500 324v-8M936 318l4 4M942 321q2-3 4 0t5-1M952 320q0-4 3-2M955.500 316v8" />
            <path d="M934 323.500h23" strokeWidth="2" />
          </g>
          <use href="#appliance" x="30" />
          <path d="M852 568v-4h3l3 5M862 568v-4h3l4 5M872 563q2-6 4 0h1q2-6 4 0h1q2-6 4 0z" />
        </g>
        {/* UCS icon */}
        <g stroke="#e8eaec">
          <path d="M883 400v45M888 450h45" strokeWidth="2" stroke="#b4b8bc" />
          <path d="M878.500 444.500h9v9h-9z" />
          <path d="M884.500 383l6 6.500 6.500-6.500M890.500 389v6M938 436l12 12M950 436l-12 12" strokeWidth="1.200" />
        </g>
        {/* Cursor highlight */}
        <circle cx="329" cy="521" r="34.500" stroke="#f5f50a" strokeWidth="3" />
        <path d="M329 521v15l3.500-3 2.500 5.500 2.500-1-2.500-5.500h4.500z" fill="#eef2f6" />
      </g>
    </svg>
  );
}

function NavBar() {
  return (
    <aside className="absolute right-0 top-[27px] h-60 w-7 rounded-l-sm bg-[#50575e]">
      <svg viewBox="0 0 28 240" className="h-60 w-7" fill="none" stroke="#3b4249">
        <path d="M16 19l9 5v11l-9 5-10-5V24zM9 26l7-3 7 4-6 5-7-2M16 32v5" />
        <path d="M7 48h14l5 5v10l-5 5H10l-4-4z" />
        <path d="M11 65V55q5-5 10 0v10z" />
        <circle cx="16" cy="58" r="5" />
        <path d="M13 77h6l-3 3zM13 147h6l-3 3zM13 185h6l-3 3z" fill="#3b4249" stroke="none" />
        <path d="M10 103V93q1.500-2 3 0v-4q1.500-2 3 0v-1q1.500-2 3 0v4q1.500-2 3 0v12q2-4 4-3l-4 8-3 3h-8l-6-9q-1-3 5 0zM13 93v8M16 90v11M19 91v10" />
        <path d="M5 120l13 14M18 118L5 134M5 124v-4h4M14 118h4v4M5 130v4h4" />
        <circle cx="20" cy="132" r="5" />
        <path d="M24 136l4 4" strokeWidth="2" />
        <path d="M14.500 157h4v18h-4zM13 164c-10 1-10 7 0 8h6c8-1 10-6 2-8M8 168l4 3-4 3" />
        <path d="M5 197h23M5 203h23M5 197v6M11 197v6M17 197v6M23 197v6M4.500 207.500h16v12h-16z" />
        <path d="M10 210v7l6-3.500z" fill="#3b4249" />
        <circle cx="25" cy="5" r="2" />
        <circle cx="25" cy="235" r="2" />
      </svg>
    </aside>
  );
}

function CommandLine() {
  return (
    <div className="absolute bottom-0 left-[385px] right-[386px] flex h-[27px] border border-[#777] bg-[#bdbdbd]">
      <div className="flex w-[53px] shrink-0 items-center bg-linear-to-b from-[#5c5c5c] to-[#3b3b3b] pl-1">
        <svg viewBox="0 0 6 18" className="h-[18px] w-[6px]" stroke="#aaa"><path d="M0.500 0v18M2.500 0v18M4.500 0v18" strokeDasharray="1 1" /></svg>
        <button aria-label="Close command line" className="ml-1"><svg viewBox="0 0 10 10" className="size-[10px]" stroke="#ddd" strokeWidth="2"><path d="M1 1l8 8M9 1L1 9" /></svg></button>
        <button aria-label="Customize command line" className="ml-[11px]">
          <Small><path d="M2 2l3 3 2-2-2-2c3-1 5 1 4 4l6 6-2 3-7-7c-3 1-6-1-5-4z" fill="#ddd" stroke="#333" strokeWidth="0.500" /></Small>
        </button>
      </div>
      <label className="flex flex-1 items-center border-l border-[#333] pl-1 pr-[3px] text-[#777]">
        <svg viewBox="0 0 15 13" className="h-[13px] w-[15px]" fill="#aab2ba" stroke="#6b747e"><path d="M0.500 0.500h14v12H0.500z" /><path d="M3 3l3 3-3 3M7 9.500h4" fill="none" stroke="#444c55" /></svg>
        <TinyCaret className="ml-1" />
        <input aria-label="Command" placeholder="Type a command" className="ml-[7px] min-w-0 flex-1 font-['DejaVu_Sans_Mono',monospace] text-[12px] italic placeholder:text-[#777]" />
        <Caret className="rotate-180 text-[#222]" />
      </label>
    </div>
  );
}

function Viewport() {
  return (
    <main className="relative min-h-0 flex-1 overflow-hidden bg-[#21282f]">
      <FloorPlan />
      <div className="absolute left-0 right-1 top-[6px] flex h-4 items-center justify-between text-[#dfe3e6]">
        <span>−][Top][2D Wireframe]</span>
        <div className="flex items-center gap-[10px] pt-1">
          <button aria-label="Minimize drawing"><svg viewBox="0 0 10 10" className="size-[10px]" stroke="#e8ecef" strokeWidth="3"><path d="M0 8h10" /></svg></button>
          <button aria-label="Restore drawing"><svg viewBox="0 0 10 10" className="size-[10px]" fill="none" stroke="#e8ecef"><path d="M3 2.500V1h6v6H7.500" strokeWidth="1.500" /><path d="M1 3.500h5.500V9H1z" strokeWidth="2" /></svg></button>
          <button aria-label="Close drawing"><svg viewBox="0 0 10 10" className="size-[10px]" stroke="#e8ecef" strokeWidth="2.500"><path d="M1 1l8 8M9 1L1 9" /></svg></button>
        </div>
      </div>
      <NavBar />
      <CommandLine />
    </main>
  );
}

/* Status bar */

function Cell({ children }: { children: ReactNode }) {
  return <div className="flex h-full shrink-0 items-center border-l border-[#8a8a8a] bg-[#4d4d4d] shadow-[inset_1px_0_0_#3a3a3a]">{children}</div>;
}

function Tool({ label, children, className = "w-6" }: { label: string; children: ReactNode; className?: string }) {
  return (
    <button aria-label={label} className={"flex h-full shrink-0 items-center justify-center " + className}>
      {children}
    </button>
  );
}

function Drop() {
  return (
    <button aria-label="More" className="flex h-full w-4 items-center justify-center">
      <svg viewBox="0 0 7 5" className="h-[5px] w-[7px]"><path d="M0 0h7L3.500 5z" fill="#fff" /></svg>
    </button>
  );
}

function ScaleFigure({ color, children }: { color: string; children?: ReactNode }) {
  return (
    <Small>
      <path d="M8 0L5.500 8 1 14l1.500 1.500L8 11l5.500 4.500L15 14l-4.500-6z" fill={color} />
      {children}
    </Small>
  );
}

function StatusBar() {
  return (
    <footer className="flex h-[29px] shrink-0 border-t border-[#606468] bg-[#393939]">
      <div className="flex flex-1 items-start text-[#b4b4b4]">
        <button className="h-4 w-[64px] bg-linear-to-b from-[#686868] to-[#8a8a8a] font-bold leading-4 text-white [clip-path:polygon(0_0,100%_0,89%_88%,84%_100%,14%_100%,8%_88%)]">Model</button>
        <button className="h-4 w-[62px] bg-[#505050] leading-4 [clip-path:polygon(2%_20%,6%_0,100%_0,90%_88%,84%_100%,10%_100%)]">Layout1</button>
        <button className="h-4 w-[67px] bg-[#505050] leading-4 [clip-path:polygon(0_20%,4%_0,100%_0,90%_88%,84%_100%,8%_100%)]">Layout2</button>
        <button aria-label="New layout" className="ml-[2px] flex h-4 w-[23px] items-center justify-center bg-[#505050] [clip-path:polygon(14%_0,100%_0,84%_100%,0_100%)]">
          <svg viewBox="0 0 8 8" className="size-2" stroke="#ddd" strokeWidth="1.500"><path d="M4 0v8M0 4h8" /></svg>
        </button>
      </div>
      <div className="flex h-[26px] shrink-0 overflow-hidden border-y border-[#777]">
        <Cell><button className="h-full w-[49px] text-[12px] text-white">MODEL</button></Cell>
        <Cell>
          <Tool label="Grid"><Small><path d="M2.500 1v14M6.500 1v14M10.500 1v14M14.500 1v14" stroke="#dcdcdc" /><path d="M0 4.500h16M0 8.500h16M0 12.500h16" stroke="#aaa" strokeDasharray="1 1" /></Small></Tool>
          <Tool label="Snap"><Small><path d="M0 2.500h16M0 6.500h16M0 10.500h16M0 14.500h16" stroke="#ddd" strokeDasharray="1 3" /><path d="M2 4.500h14M2 8.500h14M2 12.500h14" stroke="#999" strokeDasharray="1 3" /></Small></Tool>
          <Drop />
        </Cell>
        <Cell>
          <Tool label="Ortho"><Small><path d="M2.500 2v12.500H15" stroke="#2f8df0" strokeWidth="1.500" /><path d="M3 10h4v4" stroke="#2f8df0" /></Small></Tool>
          <Tool label="Polar"><Small><circle cx="7.500" cy="8" r="6.500" stroke="#ccc" /><path d="M7.500 8H16M13 5.500L16 8l-3 2.500M7.500 5v6" stroke="#ccc" /></Small></Tool>
          <Drop />
          <Tool label="Isodraft"><Small><path d="M0 0l16 16M8 0v6M8 9v7" stroke="#bbb" strokeWidth="1.300" /></Small></Tool>
          <Drop />
        </Cell>
        <Cell>
          <Tool label="Snap tracking"><Small><path d="M13 2L2 14h14" stroke="#2f7fe0" strokeWidth="1.500" /><path d="M7 9l2 5" stroke="#2f7fe0" /></Small></Tool>
          <Tool label="Object snap"><Small><path d="M4 3.500h10v11H3V6" stroke="#2f7fe0" strokeWidth="1.500" /><path d="M0 0h6v6H0z" fill="#0d6a1e" /></Small></Tool>
          <Drop />
        </Cell>
        <Cell>
          <Tool label="Annotation visibility"><ScaleFigure color="#3a9bf5"><circle cx="11" cy="4" r="3" stroke="#3a9bf5" strokeWidth="2" /></ScaleFigure></Tool>
          <Tool label="Auto scale"><ScaleFigure color="#c4c4c4"><path d="M12 0l-2 4h4l-3 4" stroke="#eee" /></ScaleFigure></Tool>
          <Tool label="Annotation scale"><ScaleFigure color="#c4c4c4" /></Tool>
          <button className="w-[68px] whitespace-nowrap text-white">1/8" = 1'-0"</button>
          <Drop />
        </Cell>
        <Cell>
          <Tool label="Workspace"><Small><circle cx="8" cy="8" r="3.500" stroke="#ddd" strokeWidth="3" /><path d="M8 1v3M8 12v3M1 8h3M12 8h3M3 3l2 2M11 11l2 2M13 3l-2 2M5 11l-2 2" stroke="#ddd" strokeWidth="2" /></Small></Tool>
          <Drop />
        </Cell>
        <Cell><Tool label="Annotation monitor" className="w-[25px]"><Small><path d="M8 1v14M1 8h14" stroke="#ccc" strokeWidth="2" /></Small></Tool></Cell>
        <Cell><Tool label="Isolate objects" className="w-[25px]"><Small><path d="M1.500 1.500h6v6h-6zM4.500 14.500l3.500-6 3.500 6z" stroke="#ddd" /><circle cx="12.500" cy="7" r="3" stroke="#ddd" /></Small></Tool></Cell>
        <Cell><Tool label="Graphics performance" className="w-[26px]"><Small><circle cx="8" cy="8" r="8" fill="#1c78d8" /><path d="M4 9l3 3 5-6" stroke="#0f58ac" strokeWidth="1.500" /></Small></Tool></Cell>
        <Cell><Tool label="Trusted file" className="w-[26px]"><Small><path d="M3 1h8v5H3z" fill="#e8e8d0" /><path d="M4 7h9v7H4z" fill="#e3d83f" /><path d="M3 2l7 3M3 12h4" stroke="#3a6fd0" strokeWidth="2" /><path d="M8 11l3 3 5-5" stroke="#31a83a" strokeWidth="2" /></Small></Tool></Cell>
        <Cell>
          <Tool label="Clean screen" className="w-[26px]"><Small><path d="M0.500 2.500h15v11h-15z" stroke="#e6e6e6" /><path d="M9 7.500l4-3M10 4.500h3v3M7 8.500l-4 3M6 11.500H3v-3" stroke="#e6e6e6" strokeWidth="1.300" /></Small></Tool>
          <Tool label="Customization" className="w-[16px]"><svg viewBox="0 0 14 14" className="size-[14px]" stroke="#ccc" strokeWidth="2"><path d="M0 2h14M0 7h14M0 12h14" /></svg></Tool>
        </Cell>
      </div>
    </footer>
  );
}

export default function App() {
  return (
    <div className="flex h-screen flex-col overflow-hidden bg-[#393939] font-['Open_Sans','Noto_Sans',sans-serif] text-[12px] leading-4">
      <TitleBar />
      <MenuTabs />
      <Ribbon />
      <FileTabs />
      <Viewport />
      <StatusBar />
      {/* Edge of the desktop taskbar */}
      <div className="flex h-1 shrink-0 bg-[#20313f]">
        <div className="ml-10 h-full w-[344px] bg-[#f2f2f2]" />
        <div className="ml-[542px] h-full w-12 bg-[#4a5a68]" />
      </div>
    </div>
  );
}
